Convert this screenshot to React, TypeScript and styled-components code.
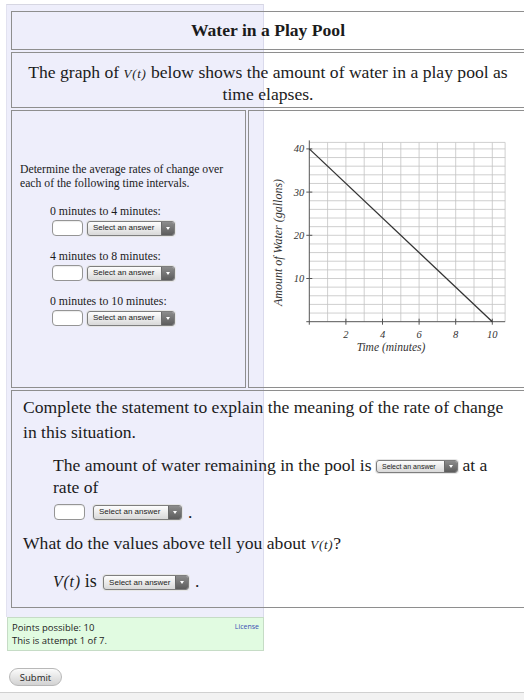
import React from "react";
import styled, { createGlobalStyle } from "styled-components";

const GlobalStyle = createGlobalStyle`
  * { box-sizing: border-box; }
  html, body { margin: 0; padding: 0; background: #ffffff; }
  body {
    font-family: "Liberation Serif", "Times New Roman", serif;
    color: #1b1b1b;
    width: 524px;
    overflow: hidden;
  }
`;

const Page = styled.div`
  padding-top: 4px;
`;

const Question = styled.div`
  margin-left: 6px;
  width: 258px;
  background: #eeeefb;
  border-top: 1px solid #d6d6e2;
  border-left: 1px solid #e2e2f0;
  border-right: 1px solid #dadaec;
  padding: 6px 0 9px 4px;
`;

const Sheet = styled.div`
  display: grid;
  grid-template-columns: 235px 277px;
  grid-template-rows: 39px 56px 278px 218px;
  gap: 2px;
  width: 514px;
`;

const Cell = styled.div<{ $span?: boolean }>`
  border: 1px solid #8e8e8e;
  grid-column: ${(p) => (p.$span ? "1 / -1" : "auto")};
`;

const TitleCell = styled(Cell)`
  display: flex;
  align-items: center;
  justify-content: center;
  font-weight: bold;
  font-size: 17.6px;
`;

const IntroCell = styled(Cell)`
  padding: 9px 8px 0;
  text-align: center;
  font-size: 17.6px;
  line-height: 21px;
`;

const Var = styled.i<{ $fs?: number }>`
  font-size: ${(p) => p.$fs ?? 13}px;
  letter-spacing: 0.7px;
`;

const RatesCell = styled(Cell)`
  padding: 52px 8px 0 8px;
`;

const RatesIntro = styled.p`
  margin: 0 0 13px;
  font-size: 11.7px;
  line-height: 14px;
`;

const Interval = styled.div`
  margin: 0 0 13px 30px;
`;

const IntervalLabel = styled.div`
  font-size: 11.8px;
  line-height: 14px;
`;

const Controls = styled.div<{ $indent?: number; $top?: number }>`
  display: flex;
  align-items: center;
  margin-top: ${(p) => p.$top ?? 2}px;
  margin-left: ${(p) => p.$indent ?? 2}px;
  height: 16px;
`;

const AnswerInput = styled.span`
  display: inline-block;
  width: 31px;
  height: 16px;
  background: #ffffff;
  border: 1px solid #959595;
  border-radius: 4px;
  box-shadow: inset 0 1px 1px rgba(0, 0, 0, 0.08);
`;

const SelectBox = styled.span<{ $w: number; $h: number; $fs: number; $ml?: number }>`
  display: inline-flex;
  align-items: stretch;
  width: ${(p) => p.$w}px;
  height: ${(p) => p.$h}px;
  margin-left: ${(p) => p.$ml ?? 0}px;
  border: 1px solid #7e7e7e;
  border-radius: 3px;
  background: linear-gradient(#fdfdfd, #d9d9d9);
  box-shadow: 0 0 0 1px #e6e6e6;
  overflow: hidden;
  vertical-align: middle;
  font-family: "Liberation Sans", Arial, sans-serif;
  font-style: normal;
  font-weight: normal;
  font-size: ${(p) => p.$fs}px;
  line-height: 1;
  color: #222222;
`;

const SelectText = styled.span`
  flex: 1;
  display: flex;
  align-items: center;
  padding-left: 5px;
  white-space: nowrap;
  overflow: hidden;
`;

const SelectArrow = styled.span`
  width: 13px;
  display: flex;
  align-items: center;
  justify-content: center;
  background: linear-gradient(#8c8c8c, #5c5c5c);
  border-left: 1px solid #6a6a6a;
  &::after {
    content: "";
    width: 0;
    height: 0;
    border-left: 2.5px solid transparent;
    border-right: 2.5px solid transparent;
    border-top: 3.5px solid #ffffff;
  }
`;

type SelProps = { w: number; h: number; fs: number; ml?: number };
const Select = ({ w, h, fs, ml }: SelProps) => (
  <SelectBox $w={w} $h={h} $fs={fs} $ml={ml}>
    <SelectText>Select an answer</SelectText>
    <SelectArrow />
  </SelectBox>
);

const GraphCell = styled(Cell)`
  padding: 1px 0 0 14px;
`;

const StatementCell = styled(Cell)`
  padding: 4px 8px 0 11px;
  font-size: 17.6px;
`;

const Prompt = styled.p<{ $lh: number; $top?: number }>`
  margin: ${(p) => p.$top ?? 0}px 0 0;
  line-height: ${(p) => p.$lh}px;
`;

const Indented = styled.p<{ $top: number }>`
  margin: ${(p) => p.$top}px 0 0 30px;
  line-height: 22px;
`;

const Dot = styled.span`
  margin-left: 6px;
  font-size: 17.6px;
`;

const BigIs = styled.span`
  font-size: 18px;
  margin: 0 2px 0 4px;
`;

const PointsBox = styled.div`
  margin-left: 7px;
  width: 257px;
  height: 34px;
  background: #e1fbe1;
  border: 1px solid #c6dcc6;
  padding: 3px 4px 0 4px;
  display: flex;
  justify-content: space-between;
  align-items: flex-start;
  font-family: "Open Sans", "Liberation Sans", sans-serif;
  font-size: 9.5px;
  line-height: 13px;
  color: #222;
`;

const License = styled.span`
  font-size: 7px;
  line-height: 10px;
  color: #3a4fb4;
  margin-top: 1px;
`;

const SubmitButton = styled.button`
  display: block;
  margin: 17px 0 0 9px;
  width: 53px;
  height: 18px;
  padding: 0;
  border-radius: 9px;
  border: 1px solid #b8b8b8;
  background: linear-gradient(#fbfbfb, #d2d2d2);
  font-family: "Open Sans", "Liberation Sans", sans-serif;
  font-size: 9.5px;
  color: #222;
`;

const Footer = styled.div`
  margin-top: 6px;
  height: 20px;
  border-top: 1px solid #d0d0d0;
  background: #f2f2f2;
`;

const Graph = () => {
  const X0 = 46.3;
  const UX = 18.3;
  const Y0 = 209.7;
  const UY = 4.32;
  const x = (t: number) => X0 + UX * t;
  const y = (v: number) => Y0 - UY * v;
  const top = y(41.5);
  const right = x(10.7);
  const vLines: number[] = [];
  for (let t = 1; t <= 10; t++) vLines.push(t);
  const hLines: number[] = [];
  for (let v = 2; v <= 40; v += 2) hLines.push(v);
  const lab = { fontFamily: '"Liberation Serif", serif', fontStyle: "italic" as const, fill: "#333" };
  return (
    <svg width="259" height="270" viewBox="0 0 259 270">
      <g stroke="#c3c3c3" strokeWidth="0.8">
        {vLines.map((t) => (
          <line key={"v" + t} x1={x(t)} y1={top} x2={x(t)} y2={Y0} />
        ))}
        <line x1={right} y1={top} x2={right} y2={Y0} />
        {hLines.map((v) => (
          <line key={"h" + v} x1={X0} y1={y(v)} x2={right} y2={y(v)} />
        ))}
        <line x1={X0} y1={top} x2={right} y2={top} />
      </g>
      <g stroke="#555" strokeWidth="1">
        <line x1={X0 - 3} y1={Y0} x2={right} y2={Y0} />
        <line x1={X0} y1={top - 2} x2={X0} y2={Y0 + 3} />
        {[10, 20, 30, 40].map((v) => (
          <line key={"ty" + v} x1={X0 - 3} y1={y(v)} x2={X0 + 3} y2={y(v)} />
        ))}
        {[2, 4, 6, 8, 10].map((t) => (
          <line key={"tx" + t} x1={x(t)} y1={Y0 - 3} x2={x(t)} y2={Y0 + 3} />
        ))}
      </g>
      <line x1={x(0)} y1={y(40)} x2={x(10)} y2={y(0)} stroke="#333" strokeWidth="1.3" />
      {[10, 20, 30, 40].map((v) => (
        <text key={"ly" + v} x={X0 - 5} y={y(v) + 3.5} fontSize="10.5" textAnchor="end" {...lab}>
          {v}
        </text>
      ))}
      {[2, 4, 6, 8, 10].map((t) => (
        <text key={"lx" + t} x={x(t)} y={225.5} fontSize="10.5" textAnchor="middle" {...lab}>
          {t}
        </text>
      ))}
      <text x={128} y={239} fontSize="11.5" textAnchor="middle" {...lab}>
        Time (minutes)
      </text>
      <text
        x={0}
        y={0}
        fontSize="12"
        textAnchor="middle"
        transform="translate(19 130.5) rotate(-90)"
        {...lab}
      >
        Amount of Water (gallons)
      </text>
    </svg>
  );
};

export default function App() {
  return (
    <>
      <GlobalStyle />
      <Page>
        <Question>
          <Sheet>
            <TitleCell $span>Water in a Play Pool</TitleCell>
            <IntroCell $span>
              The graph of <Var>V(t)</Var> below shows the amount of water in a play pool as time elapses.
            </IntroCell>
            <RatesCell>
              <RatesIntro>
                Determine the average rates of change over each of the following time intervals.
              </RatesIntro>
              {["0 minutes to 4 minutes:", "4 minutes to 8 minutes:", "0 minutes to 10 minutes:"].map((l) => (
                <Interval key={l}>
                  <IntervalLabel>{l}</IntervalLabel>
                  <Controls>
                    <AnswerInput />
                    <Select w={88} h={15} fs={8} ml={4} />
                  </Controls>
                </Interval>
              ))}
            </RatesCell>
            <GraphCell>
              <Graph />
            </GraphCell>
            <StatementCell $span>
              <Prompt $lh={25}>
                Complete the statement to explain the meaning of the rate of change in this situation.
              </Prompt>
              <Indented $top={9}>
                <span>The amount of water remaining in the pool is</span> <Select w={82} h={13} fs={7} />{" "}
                <span>at a</span>
                <br />
                <span>rate of</span>
              </Indented>
              <Controls $indent={31} $top={6}>
                <AnswerInput />
                <Select w={89} h={15} fs={8} ml={8} />
                <Dot>.</Dot>
              </Controls>
              <Prompt $lh={22} $top={12}>
                What do the values above tell you about <Var>V(t)</Var>?
              </Prompt>
              <Indented $top={14}>
                <Var $fs={16}>V(t)</Var>
                <BigIs>is</BigIs> <Select w={86} h={15} fs={8} />
                <Dot>.</Dot>
              </Indented>
            </StatementCell>
          </Sheet>
        </Question>
        <PointsBox>
          <div>
            Points possible: 10
            <br />
            This is attempt 1 of 7.
          </div>
          <License>License</License>
        </PointsBox>
        <SubmitButton>Submit</SubmitButton>
        <Footer />
      </Page>
    </>
  );
}
